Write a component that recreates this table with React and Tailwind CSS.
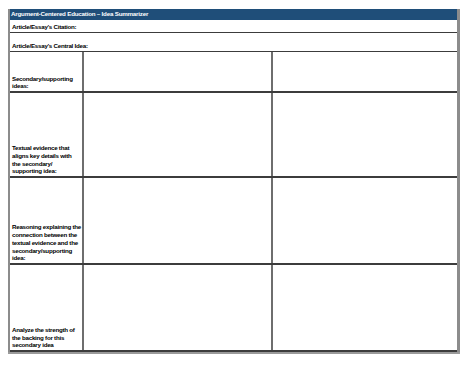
export default function App() {
  const font = { fontFamily: '"Liberation Sans", Arial, sans-serif' };
  const label = "text-[6.2px] tracking-[-0.25px] leading-[7.7px] font-bold text-black";
  return (
    <div className="w-[474px] h-[366px] bg-white pt-[9px] pl-[8px]" style={font}>
      <div className="w-[452px] flex flex-col border-l-2 border-r-[3px] border-[#8c8c8c] shadow-[0_2px_0_#9a9a9a]">
        <div className="h-[11px] bg-[#1f4e79] flex items-center pl-[1px]">
          <span className="text-[6.2px] tracking-[-0.2px] font-bold text-white leading-none">Argument-Centered Education – Idea Summarizer</span>
        </div>
        <div className="h-[13px] border-b-[1.5px] border-[#3c3c3c] flex items-end pl-[2px] pb-[1.5px]">
          <span className={label}>Article/Essay’s Citation:</span>
        </div>
        <div className="h-[19px] border-b-[1.5px] border-[#3c3c3c] flex items-end pl-[2px] pb-[1.5px]">
          <span className={label}>Article/Essay’s Central Idea:</span>
        </div>
        {[
          { h: "h-[41px]", t: ["Secondary/supporting", "ideas:"] },
          { h: "h-[85px]", t: ["Textual evidence that", "aligns key details with", "the secondary/", "supporting idea:"] },
          { h: "h-[87px]", t: ["Reasoning explaining the", "connection between the", "textual evidence and the", "secondary/supporting", "idea:"] },
          { h: "h-[87px]", t: ["Analyze the strength of", "the backing for this", "secondary idea"] },
        ].map((r, i) => (
          <div key={i} className={`${r.h} grid grid-cols-[74px_189px_1fr] border-b-2 border-[#3c3c3c]`}>
            <div className="border-r-2 border-[#6e6e6e] flex flex-col justify-end pl-[2px] pb-[1px]">
              {r.t.map((l, j) => (
                <div key={j} className={label + " whitespace-nowrap"}>{l}</div>
              ))}
            </div>
            <div className="border-r-2 border-[#6e6e6e]" />
            <div />
          </div>
        ))}
      </div>
    </div>
  );
}
